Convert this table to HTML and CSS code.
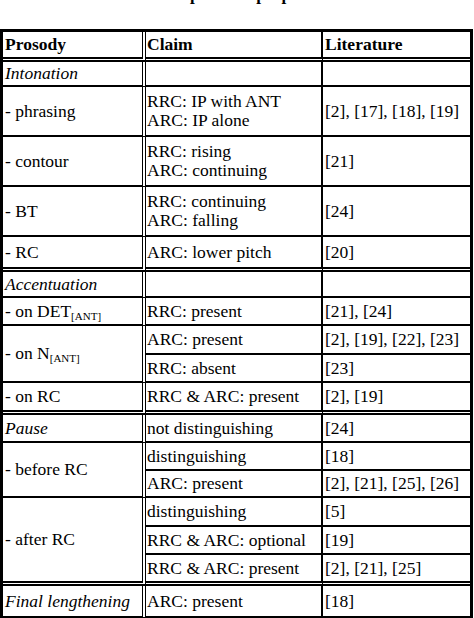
FILE: index.html
```html
<!DOCTYPE html>
<html>
<head>
<meta charset="utf-8">
<link rel="stylesheet" href="styles.css">
</head>
<body>
<div class="caption"><p>Table 1: prosodic properties</p></div>
<div class="grid">
  <div class="c1 hd">Prosody</div>
  <div class="c2 hd">Claim</div>
  <div class="c3 hd">Literature</div>

  <div class="c1 it">Intonation</div>
  <div class="c2"></div>
  <div class="c3"></div>

  <div class="c1">- phrasing</div>
  <div class="c2 two">RRC: IP with ANT<br>ARC: IP alone</div>
  <div class="c3">[2], [17], [18], [19]</div>

  <div class="c1">- contour</div>
  <div class="c2 two">RRC: rising<br>ARC: continuing</div>
  <div class="c3">[21]</div>

  <div class="c1">- BT</div>
  <div class="c2 two">RRC: continuing<br>ARC: falling</div>
  <div class="c3">[24]</div>

  <div class="c1 end">- RC</div>
  <div class="c2 end">ARC: lower pitch</div>
  <div class="c3 end">[20]</div>

  <div class="c1 it">Accentuation</div>
  <div class="c2"></div>
  <div class="c3"></div>

  <div class="c1"><span>- on DET<sub>[ANT]</sub></span></div>
  <div class="c2">RRC: present</div>
  <div class="c3">[21], [24]</div>

  <div class="c1 span2"><span>- on N<sub>[ANT]</sub></span></div>
  <div class="c2">ARC: present</div>
  <div class="c3">[2], [19], [22], [23]</div>
  <div class="c2">RRC: absent</div>
  <div class="c3">[23]</div>

  <div class="c1 end">- on RC</div>
  <div class="c2 end">RRC &amp; ARC: present</div>
  <div class="c3 end">[2], [19]</div>

  <div class="c1 it">Pause</div>
  <div class="c2">not distinguishing</div>
  <div class="c3">[24]</div>

  <div class="c1 span2">- before RC</div>
  <div class="c2">distinguishing</div>
  <div class="c3">[18]</div>
  <div class="c2">ARC: present</div>
  <div class="c3">[2], [21], [25], [26]</div>

  <div class="c1 span3 end">- after RC</div>
  <div class="c2">distinguishing</div>
  <div class="c3">[5]</div>
  <div class="c2">RRC &amp; ARC: optional</div>
  <div class="c3">[19]</div>
  <div class="c2 end">RRC &amp; ARC: present</div>
  <div class="c3 end">[2], [21], [25]</div>

  <div class="c1 it">Final lengthening</div>
  <div class="c2">ARC: present</div>
  <div class="c3">[18]</div>
</div>
</body>
</html>
```

FILE: styles.css
```css
html, body {
  margin: 0;
  padding: 0;
  background: #fff;
}
body {
  font-family: "Liberation Serif", "Times New Roman", serif;
  font-size: 17.5px;
  color: #000;
  width: 474px;
  overflow: hidden;
}
.caption {
  display: flow-root;
  height: 29px;
  overflow: hidden;
}
.caption p {
  margin: -14px 0 0 0;
  padding-right: 16px;
  font-weight: bold;
  font-size: 17px;
  line-height: 17px;
  text-align: center;
}
.grid {
  box-sizing: border-box;
  width: 473px;
  border: 3px solid #000;
  border-bottom: none;
  display: grid;
  grid-template-columns: 143px 177px 147px;
  grid-template-rows: 30px 25px 50px 50px 50px 35px 26px 28px 29px 28px 32px 28px 28px 27px 29px 28px 31px 32px;
}
.grid > div {
  box-sizing: border-box;
  display: flex;
  flex-direction: column;
  justify-content: center;
  border-bottom: 2px solid #000;
  line-height: 19px;
  white-space: nowrap;
}
.c1 {
  border-right: 4px double #000;
  padding-left: 2px;
}
.c2 {
  border-right: 2px solid #000;
  padding-left: 1px;
}
.c3 {
  padding-left: 2px;
}
.grid > .hd {
  font-weight: bold;
  border-bottom: 5px double #000;
}
.grid > .end {
  border-bottom: 5px double #000;
}
.it {
  font-style: italic;
}
.grid > .two {
  display: block;
  padding-top: 5px;
}
.span2 {
  grid-row: span 2;
}
.span3 {
  grid-row: span 3;
}
sub {
  font-size: 11px;
  vertical-align: -3px;
  line-height: 0;
}
```
